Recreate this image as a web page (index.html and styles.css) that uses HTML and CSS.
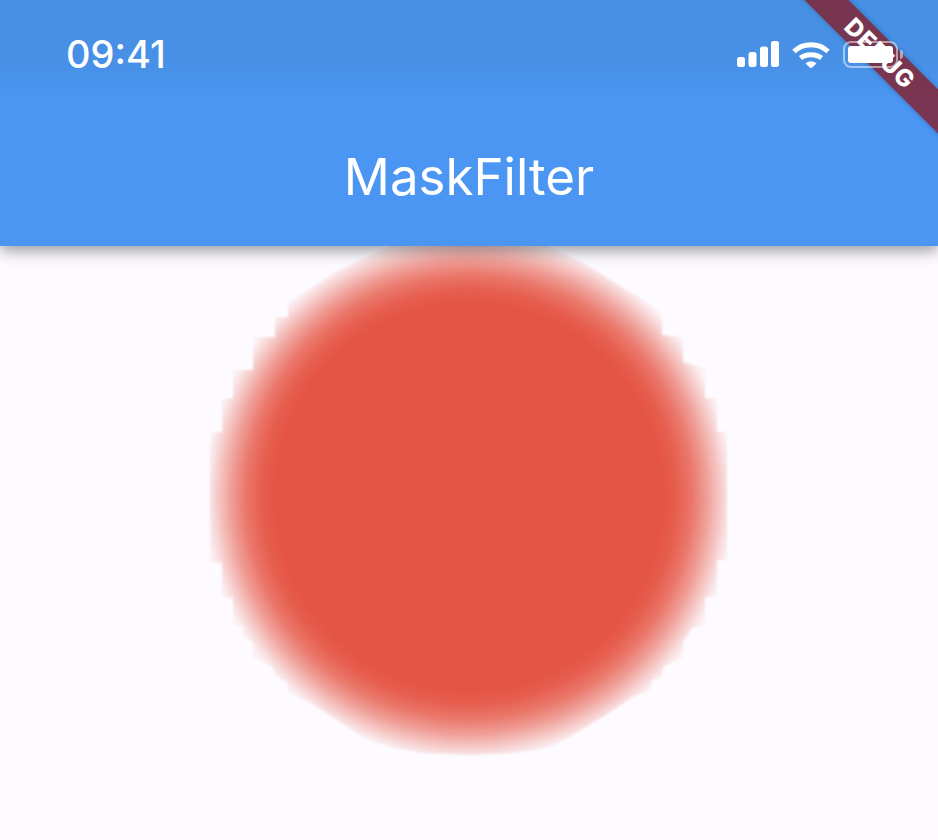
FILE: index.html
```html
<!DOCTYPE html>
<html lang="en">
<head>
<meta charset="utf-8">
<title>MaskFilter</title>
<link rel="stylesheet" href="styles.css">
</head>
<body>
<div class="screen">
  <header class="appbar">
    <div class="statusbar">
      <span class="time">09:41</span>
      <div class="status-icons">
        <svg class="signal" width="42" height="26" viewBox="0 0 42 26" fill="#fff"><rect x="0" y="16" width="8" height="10" rx="2.500"/><rect x="11.500" y="11" width="8" height="15" rx="2.500"/><rect x="23" y="5.500" width="8" height="20.500" rx="2.500"/><rect x="34" y="0" width="8" height="26" rx="2.500"/></svg>
        <svg class="wifi" width="38" height="27" viewBox="0 0 38 27" fill="none" stroke="#fff" stroke-width="5"><path d="M2 10.500C11 1.500 27 1.500 36 10.500"/><path d="M8.500 17C14 12.500 24 12.500 29.500 17"/><path d="M13.500 22.500 19 27.500 24.500 22.500C21 19.500 17 19.500 13.500 22.500Z" fill="#fff" stroke="none"/></svg>
        <div class="battery"><div class="battery-fill"></div><div class="battery-tip"></div></div>
      </div>
    </div>
    <div class="titlebar"><h1 class="title">MaskFilter</h1></div>
  </header>
  <main class="content">
    <div class="blur-soft"><div class="blur-circle"></div></div>
  </main>
  <div class="debug-banner">DEBUG</div>
</div>
</body>
</html>
```

FILE: styles.css
```css
html, body {
  margin: 0;
  padding: 0;
  background: #fdfbff;
}
.screen {
  position: relative;
  isolation: isolate;
  width: 938px;
  height: 840px;
  overflow: hidden;
  display: flex;
  flex-direction: column;
  background: #fdfbff;
  font-family: "Inter", "Liberation Sans", sans-serif;
  color: #fff;
}
.appbar {
  position: relative;
  height: 246px;
  flex: none;
  background: linear-gradient(#4790e3 0, #4790e6 60px, #4a96f2 100px, #4a96f2 100%);
  box-shadow: 0 5px 14px rgba(0, 0, 0, 0.38);
  display: flex;
  flex-direction: column;
}
.statusbar {
  height: 110px;
  flex: none;
  display: flex;
  align-items: center;
  justify-content: space-between;
  padding: 0 40px 2px 66px;
  box-sizing: border-box;
}
.time {
  font-size: 38px;
  font-weight: 500;
  line-height: 1;
}
.status-icons {
  display: flex;
  align-items: center;
  gap: 13px;
}
.battery {
  position: relative;
  z-index: 4;
  width: 55px;
  height: 27px;
  border: 2px solid rgba(255, 255, 255, 0.5);
  border-radius: 8px;
  box-sizing: border-box;
  padding: 3px;
}
.battery-fill {
  width: 100%;
  height: 100%;
  background: #fff;
  border-radius: 3px;
}
.battery-tip {
  position: absolute;
  right: -7px;
  top: 7px;
  width: 3px;
  height: 9px;
  border-radius: 0 3px 3px 0;
  background: rgba(255, 255, 255, 0.5);
}
.titlebar {
  flex: 1;
  display: flex;
  align-items: center;
  justify-content: center;
  padding-bottom: 2px;
}
.title {
  margin: 0;
  font-size: 51px;
  font-weight: 400;
  line-height: 56px;
}
.content {
  position: relative;
  z-index: -1;
  flex: 1;
  display: flex;
  justify-content: center;
  align-items: flex-start;
}
.blur-soft {
  flex: none;
  width: 518px;
  height: 516px;
  margin-top: -7px;
  filter: blur(1px);
}
.blur-circle {
  width: 100%;
  height: 100%;
  background: radial-gradient(closest-side,
    #e55545 0,
    #e55545 75%,
    rgba(229, 85, 69, 0.95) 80%,
    rgba(229, 85, 69, 0.8) 86%,
    rgba(229, 85, 69, 0.55) 92%,
    rgba(229, 85, 69, 0.32) 96.500%,
    rgba(229, 85, 69, 0.16) 99.600%,
    rgba(229, 85, 69, 0.06) 102%);
  clip-path: polygon(177px 0, 340px 0, 340px 9px, 357px 16px, 373px 24px, 393px 36px, 420px 53px, 442px 66px, 452px 76px, 452px 96px, 473px 98px, 473px 123px, 495px 129px, 495px 159px, 507px 159px, 507px 193px, 517px 193px, 517px 321px, 507px 321px, 507px 356px, 495px 359px, 495px 386px, 482px 389px, 473px 403px, 473px 418px, 453px 428px, 452px 438px, 442px 441px, 440px 451px, 423px 458px, 393px 478px, 360px 498px, 340px 508px, 307px 514px, 260px 516px, 210px 514px, 180px 508px, 157px 501px, 130px 483px, 100px 464px, 78px 453px, 77px 443px, 67px 438px, 62px 428px, 43px 418px, 43px 403px, 33px 398px, 33px 388px, 23px 386px, 23px 359px, 12px 358px, 12px 324px, 0 323px, 0 193px, 12px 193px, 12px 159px, 23px 159px, 23px 131px, 43px 131px, 43px 98px, 65px 98px, 65px 78px, 78px 78px, 78px 64px, 90px 56px, 103px 48px, 123px 34px, 147px 23px, 160px 16px, 177px 9px);
}
.debug-banner {
  position: absolute;
  z-index: 3;
  top: 38px;
  right: -92px;
  width: 300px;
  height: 31px;
  line-height: 31px;
  transform: rotate(45deg);
  text-align: center;
  background: rgba(128, 40, 58, 0.88);
  font-family: "Inter", "Liberation Sans", sans-serif;
  font-weight: 800;
  font-size: 24px;
  letter-spacing: 1px;
  box-shadow: 0 0 5px rgba(0, 0, 0, 0.25);
}
```
